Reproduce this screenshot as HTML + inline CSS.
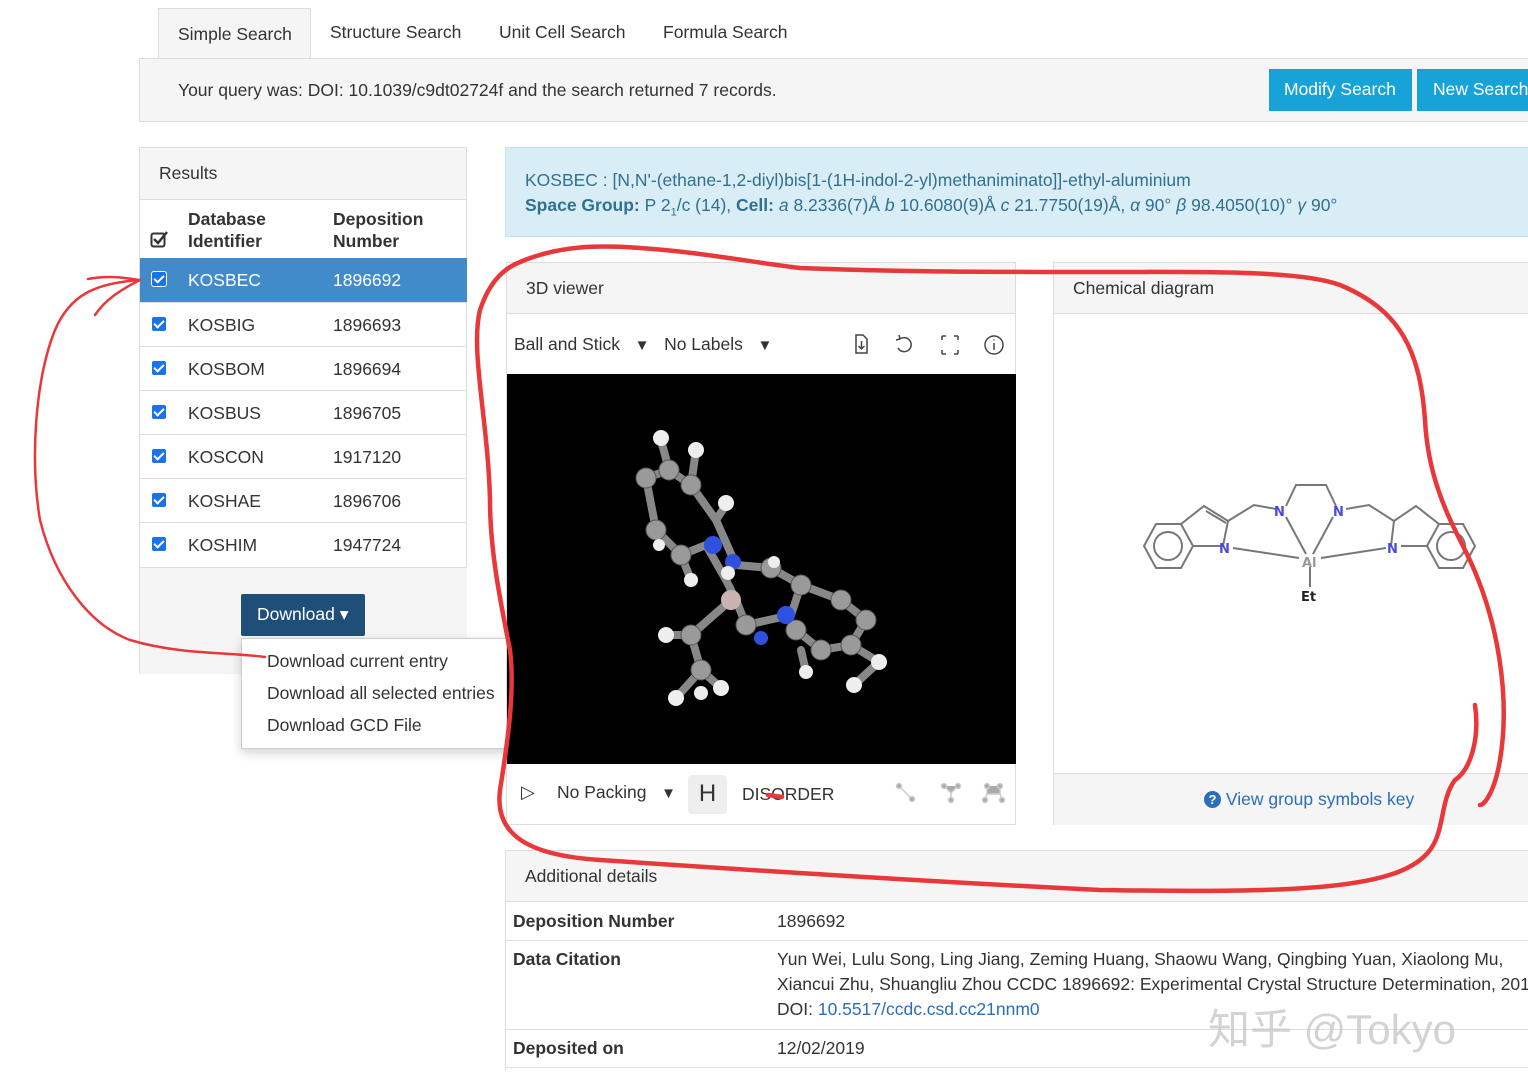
<!DOCTYPE html>
<html><head><meta charset="utf-8">
<style>
*{box-sizing:border-box;margin:0;padding:0}
body{width:1528px;height:1089px;overflow:hidden;background:#fff;font-family:"Liberation Sans",Arial,sans-serif;font-size:17.5px;color:#333;position:relative}
.a{position:absolute}
.panel{position:absolute;border:1px solid #ddd;background:#fff}
.ph{position:absolute;left:0;right:0;top:0;height:51px;background:#f5f5f5;border-bottom:1px solid #ddd;padding:15px 0 0 19px}
.cb{position:absolute;width:14px;height:14px;background:#1a73e8;border-radius:2px}
.cb:after{content:"";position:absolute;left:4px;top:1px;width:4px;height:8px;border:solid #fff;border-width:0 2px 2px 0;transform:rotate(45deg)}
.row{position:absolute;left:0;width:327px;height:44px;border-top:1px solid #ddd}
.row .cb{left:12px;top:14px}
.row span{position:absolute;top:12px}
</style></head><body>
<div class="a" style="left:158px;top:8px;width:153px;height:52px;border:1px solid #ddd;border-bottom:none;background:#f5f5f5;padding:15px 0 0 19px">Simple Search</div>
<div class="a" style="left:330px;top:22px">Structure Search</div>
<div class="a" style="left:499px;top:22px">Unit Cell Search</div>
<div class="a" style="left:663px;top:22px">Formula Search</div>
<div class="a" style="left:139px;top:58px;width:1400px;height:64px;background:#f5f5f5;border:1px solid #ddd;padding:21px 0 0 38px">Your query was: DOI: 10.1039/c9dt02724f and the search returned 7 records.</div>
<div class="a" style="left:1269px;top:69px;width:143px;height:42px;background:#17a2d8;color:#fff;padding:10px 0 0 15px">Modify Search</div>
<div class="a" style="left:1417px;top:69px;width:120px;height:42px;background:#17a2d8;color:#fff;padding:10px 0 0 16px">New Search</div>

<div class="panel" style="left:139px;top:147px;width:328px;height:527px">
 <div class="ph" style="height:52px">Results</div>
 <svg class="a" style="left:10px;top:82px" width="20" height="18" viewBox="0 0 20 18"><rect x="1.5" y="3.5" width="13" height="13" rx="2" fill="none" stroke="#333" stroke-width="2"/><path d="M4 9 L8 13 L17 2" fill="none" stroke="#333" stroke-width="2.5"/></svg>
 <div class="a" style="left:48px;top:60px;font-weight:bold;line-height:22px">Database<br>Identifier</div>
 <div class="a" style="left:193px;top:60px;font-weight:bold;line-height:22px">Deposition<br>Number</div>
 <div class="row" style="top:110px;background:#428bca;color:#fff;border-top:none"><div class="cb" style="background:#1a73e8;outline:1px solid #fff"></div><span style="left:48px">KOSBEC</span><span style="left:193px">1896692</span></div>
 <div class="row" style="top:154px"><div class="cb"></div><span style="left:48px">KOSBIG</span><span style="left:193px">1896693</span></div>
 <div class="row" style="top:198px"><div class="cb"></div><span style="left:48px">KOSBOM</span><span style="left:193px">1896694</span></div>
 <div class="row" style="top:242px"><div class="cb"></div><span style="left:48px">KOSBUS</span><span style="left:193px">1896705</span></div>
 <div class="row" style="top:286px"><div class="cb"></div><span style="left:48px">KOSCON</span><span style="left:193px">1917120</span></div>
 <div class="row" style="top:330px"><div class="cb"></div><span style="left:48px">KOSHAE</span><span style="left:193px">1896706</span></div>
 <div class="row" style="top:374px"><div class="cb"></div><span style="left:48px">KOSHIM</span><span style="left:193px">1947724</span></div>
 <div class="a" style="left:0;top:419px;width:327px;height:107px;background:#f5f5f5;border-top:1px solid #ddd"></div>
 <div class="a" style="left:101px;top:446px;width:124px;height:42px;background:#1f4e79;color:#fff;padding:10px 0 0 16px;border-radius:2px">Download ▾</div>
</div>
<div class="a" style="left:241px;top:638px;width:278px;height:111px;background:#fff;border:1px solid #ccc;box-shadow:0 4px 10px rgba(0,0,0,.18);line-height:32px;padding:6px 0 0 25px">Download current entry<br>Download all selected entries<br>Download GCD File</div>

<div class="a" style="left:505px;top:147px;width:1030px;height:90px;background:#d9edf7;border:1px solid #bce8f1;color:#31708f;padding:20px 0 0 19px;line-height:25px">KOSBEC : [N,N'-(ethane-1,2-diyl)bis[1-(1H-indol-2-yl)methaniminato]]-ethyl-aluminium<br><b>Space Group:</b> P 2<sub style="font-size:11px">1</sub>/c (14), <b>Cell:</b> <i>a</i> 8.2336(7)Å <i>b</i> 10.6080(9)Å <i>c</i> 21.7750(19)Å, <i>α</i> 90° <i>β</i> 98.4050(10)° <i>γ</i> 90°</div>

<div class="panel" style="left:506px;top:262px;width:510px;height:563px">
 <div class="ph">3D viewer</div>
 <div class="a" style="left:7px;top:71px">Ball and Stick &nbsp;&nbsp;<span style="font-size:15px">▼</span>&nbsp;&nbsp; No Labels &nbsp;&nbsp;<span style="font-size:15px">▼</span></div>
 <svg class="a" style="left:345px;top:70px" width="160" height="24" viewBox="0 0 160 24" fill="none" stroke="#444" stroke-width="1.5">
  <path d="M4 2 H11 L15 6 V20 H4 Z M9.5 8 V16 M6.5 13 L9.5 16 L12.5 13"/>
  <path d="M48 6 A7 7 0 1 1 46 15 M48 6 L47 2 M48 6 L44 7"/>
  <path d="M90 3 H94 M90 3 V7 M106 3 H102 M106 3 V7 M90 21 H94 M90 21 V17 M106 21 H102 M106 21 V17"/>
  <circle cx="142" cy="12" r="9"/><path d="M142 10 V17 M142 6.5 V7.5"/>
 </svg>
 <div class="a" style="left:0;top:111px;width:509px;height:390px;background:#000">
  <svg width="509" height="390" viewBox="506 374 509 390">
   <g stroke="#888" stroke-width="8" stroke-linecap="round" fill="none">
    <path d="M660 440 L668 470 L645 478 L655 530 L680 555 L690 580"/>
    <path d="M695 450 L690 485 L715 520 L735 565 L770 568 L800 585 L840 600 L865 620 L850 645 L820 650 L795 630"/>
    <path d="M668 470 L690 485 M680 555 L705 545 L725 580 L735 600 L745 625 L790 615 L800 585"/>
    <path d="M730 600 L690 635 L700 670 M725 505 L715 520 M800 650 L805 672 M850 645 L878 662 L853 685"/>
    <path d="M690 635 L665 635 M700 670 L675 698 M700 670 L720 688"/>
   </g>
   <g fill="#9a9a9a" stroke="#555" stroke-width="1">
    <circle cx="668" cy="470" r="10"/><circle cx="645" cy="478" r="10"/><circle cx="655" cy="530" r="10"/><circle cx="690" cy="485" r="10"/><circle cx="680" cy="555" r="10"/><circle cx="770" cy="568" r="10"/><circle cx="800" cy="585" r="10"/><circle cx="840" cy="600" r="10"/><circle cx="865" cy="620" r="10"/><circle cx="850" cy="645" r="10"/><circle cx="820" cy="650" r="10"/><circle cx="795" cy="630" r="10"/><circle cx="690" cy="635" r="10"/><circle cx="700" cy="670" r="10"/><circle cx="745" cy="625" r="10"/>
   </g>
   <g fill="#3050e0"><circle cx="712" cy="545" r="9"/><circle cx="732" cy="562" r="8"/><circle cx="785" cy="615" r="9"/><circle cx="760" cy="638" r="7"/></g>
   <circle cx="730" cy="600" r="10" fill="#c9b2b2"/>
   <g fill="#eee"><circle cx="660" cy="438" r="8"/><circle cx="695" cy="450" r="8"/><circle cx="725" cy="503" r="8"/><circle cx="690" cy="580" r="7"/><circle cx="658" cy="545" r="6"/><circle cx="727" cy="573" r="7"/><circle cx="665" cy="635" r="8"/><circle cx="675" cy="698" r="8"/><circle cx="700" cy="693" r="7"/><circle cx="720" cy="688" r="8"/><circle cx="805" cy="672" r="7"/><circle cx="878" cy="662" r="8"/><circle cx="853" cy="685" r="8"/><circle cx="773" cy="562" r="6"/></g>
  </svg>
 </div>
 <div class="a" style="left:14px;top:519px;font-size:18px">▷</div>
 <div class="a" style="left:50px;top:519px">No Packing &nbsp;&nbsp;<span style="font-size:15px">▼</span></div>
 <div class="a" style="left:181px;top:512px;width:39px;height:39px;background:#eee;border-radius:4px;font-size:24px;text-align:center;padding-top:5px">H</div>
 <div class="a" style="left:235px;top:521px">DISORDER</div>
 <svg class="a" style="left:385px;top:518px" width="115" height="24" viewBox="0 0 115 24" fill="#aaa" stroke="#ccc" stroke-width="1.5">
  <path d="M7 5 L20 18"/><circle cx="7" cy="5" r="2.5"/><circle cx="20" cy="18" r="2.5"/>
  <path d="M52 5 L59 12 L66 5 M59 12 V19"/><circle cx="52" cy="5" r="2.5"/><circle cx="66" cy="5" r="2.5"/><circle cx="59" cy="19" r="2.5"/>
  <path d="M95 5 V13 L108 13 V5 M95 13 L93 19 M108 13 L110 19"/><circle cx="95" cy="5" r="2.5"/><circle cx="108" cy="5" r="2.5"/><circle cx="93" cy="19" r="2.5"/><circle cx="110" cy="19" r="2.5"/>
 </svg>
</div>

<div class="panel" style="left:1053px;top:262px;width:490px;height:563px">
 <div class="ph">Chemical diagram</div>
 <svg class="a" style="left:85px;top:215px" width="340" height="130" viewBox="1138 477 340 130">
  <g stroke="#777" stroke-width="2" fill="none">
   <polygon points="1143,545 1155,523 1180,523 1192,545 1180,567 1155,567"/><circle cx="1167" cy="545" r="14"/>
   <path d="M1180,523 L1203,505 L1227,520 L1222,545 L1192,545 M1227,520 L1253,504 L1275,508 M1285,505 L1295,484 L1325,484 L1335,505 M1345,508 L1368,504 L1393,520 L1390,545 M1393,520 L1415,505 L1438,523 M1205,510 L1225,522"/>
   <polygon points="1438,523 1462,523 1474,545 1462,567 1438,567 1426,545"/><circle cx="1450" cy="545" r="14"/>
   <path d="M1426,545 L1400,545 M1232,547 L1298,557 M1320,557 L1385,547 M1285,516 L1305,553 M1332,516 L1312,553 M1309,566 L1309,586"/>
  </g>
  <g font-family="DejaVu Sans" font-weight="bold" font-size="13" fill="#4a4ae0">
   <text x="1218" y="552">N</text><text x="1273" y="515">N</text><text x="1332" y="515">N</text><text x="1386" y="552">N</text>
  </g>
  <text x="1301" y="566" font-family="DejaVu Sans" font-weight="bold" font-size="13" fill="#999">Al</text>
  <text x="1300" y="600" font-family="DejaVu Sans" font-weight="bold" font-size="13" fill="#222">Et</text>
 </svg>
 <div class="a" style="left:0;right:0;top:510px;height:52px;background:#f5f5f5;border-top:1px solid #ddd;color:#2a6ebb;padding:15px 0 0 150px"><span style="display:inline-block;width:17px;height:17px;border-radius:50%;background:#2a6ebb;color:#fff;font-size:13px;text-align:center;font-weight:bold;line-height:17px;vertical-align:1px">?</span> View group symbols key</div>
</div>

<div class="panel" style="left:505px;top:850px;width:1040px;height:220px;border-bottom:none">
 <div class="ph" style="height:51px">Additional details</div>
 <div class="a" style="left:7px;top:60px;font-weight:bold">Deposition Number</div>
 <div class="a" style="left:271px;top:60px">1896692</div>
 <div class="a" style="left:0;right:0;top:89px;border-top:1px solid #ddd"></div>
 <div class="a" style="left:7px;top:98px;font-weight:bold">Data Citation</div>
 <div class="a" style="left:271px;top:96px;line-height:25px;white-space:nowrap">Yun Wei, Lulu Song, Ling Jiang, Zeming Huang, Shaowu Wang, Qingbing Yuan, Xiaolong Mu,<br>Xiancui Zhu, Shuangliu Zhou CCDC 1896692: Experimental Crystal Structure Determination, 2019<br>DOI: <span style="color:#2a6ebb">10.5517/ccdc.csd.cc21nnm0</span></div>
 <div class="a" style="left:0;right:0;top:178px;border-top:1px solid #ddd"></div>
 <div class="a" style="left:7px;top:187px;font-weight:bold">Deposited on</div>
 <div class="a" style="left:271px;top:187px">12/02/2019</div>
 <div class="a" style="left:0;right:0;top:216px;border-top:1px solid #ddd"></div>
</div>
<div class="a" style="left:1208px;top:996px;font-size:42px;color:rgba(200,200,200,.8);font-family:'Liberation Sans','Noto Sans CJK SC',sans-serif">知乎 @Tokyo</div>

<svg class="a" style="left:0;top:0" width="1528" height="1089">
 <g stroke="#e8383a" stroke-width="4.5" fill="none" stroke-linecap="round" stroke-linejoin="round">
  <path d="M520 262 C560 245 600 245 640 248 C700 252 750 262 800 268 C900 272 1000 272 1100 272 C1200 272 1300 270 1340 285 C1400 310 1420 350 1425 420 C1428 480 1450 520 1465 550 C1500 620 1510 700 1500 760 C1495 790 1485 805 1480 805 M1475 705 C1480 740 1470 770 1455 780 C1440 800 1445 830 1430 850 C1400 890 1300 893 1100 890 C900 880 750 870 600 860 C520 855 495 830 500 790 C508 740 515 690 510 650 C500 600 490 550 490 500 C488 420 470 350 480 310 C490 280 505 268 520 262"/>
  <path d="M265 657 C230 652 180 655 130 640 C90 625 55 580 40 520 C30 460 35 380 55 330 C70 295 95 283 140 280 M88 279 C110 275 125 278 140 280 M95 315 C105 300 120 290 140 280" stroke-width="2.5"/>
  <path d="M768 795 L782 797"/>
 </g>
</svg>
</body></html>
